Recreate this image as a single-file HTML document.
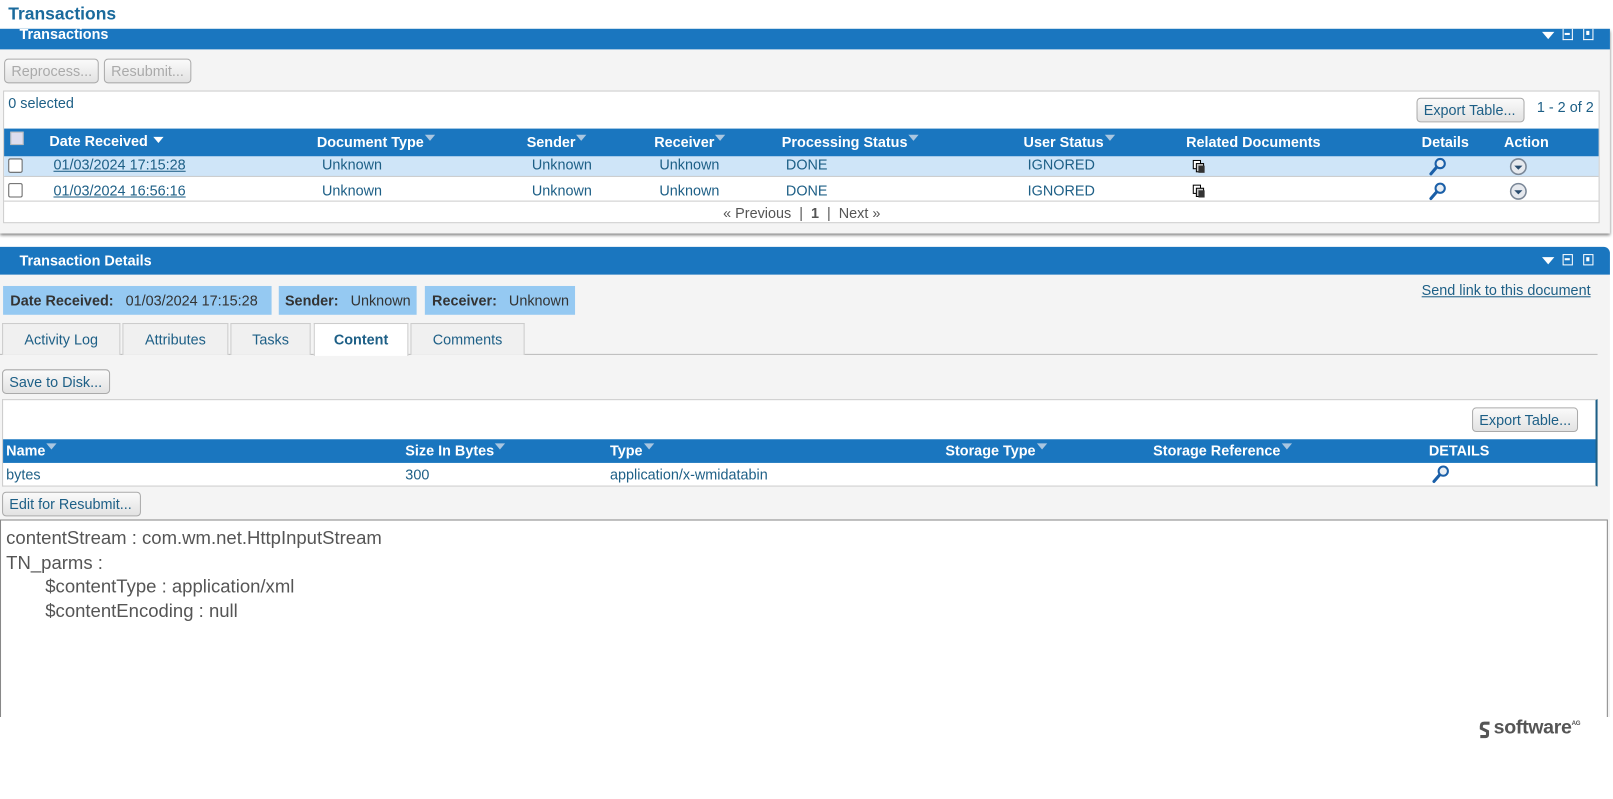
<!DOCTYPE html>
<html><head><meta charset="utf-8"><style>
*{box-sizing:border-box;margin:0;padding:0}
body{width:1613px;height:749px;overflow:hidden;background:#fff;font-family:"Liberation Sans",Arial,sans-serif;font-size:14px;color:#1d5f86;position:relative}
#w{position:absolute;left:0;top:0;width:1568px;height:728px;transform:scale(1.0287);transform-origin:0 0}
.a{position:absolute;white-space:nowrap}
.blue{background:#1a76bf}
.hd{color:#fff;font-weight:bold;font-size:14px}
.btn{position:absolute;height:24px;border:1px solid #aaa;border-radius:4px;background:linear-gradient(#fafafa,#e2e2e2);font-size:14px;line-height:22px;padding:0 6px;color:#1d5f86;white-space:nowrap}
.dis{color:#aaa}
.tri{display:inline-block;width:0;height:0;border-left:5px solid transparent;border-right:5px solid transparent;border-top:6px solid #a9c6e0;margin-left:1px;vertical-align:6px}
.trw{border-top-color:#fff}
.ctl{position:absolute;width:10px;height:11px;border:1.5px solid #fff}
u{text-decoration:underline}
</style></head><body><div id="w">
<div class="a" style="left:8px;top:4px;font-size:17px;font-weight:bold;color:#1a6a9c">Transactions</div>

<div class="a" style="left:0;top:28px;width:1565px;height:199px;background:#f4f4f4;box-shadow:0 2px 3px #777"></div>
<div class="a blue" style="left:0;top:28px;width:1565px;height:20px"></div>
<div class="a hd" style="left:19px;top:25px">Transactions</div>
<div class="a" style="left:1499px;top:31px;border-left:6px solid transparent;border-right:6px solid transparent;border-top:7px solid #fff"></div>
<div class="ctl" style="left:1519px;top:28px;border-top:none"><div style="position:absolute;left:1px;top:4px;width:5px;height:1.5px;background:#fff"></div></div>
<div class="ctl" style="left:1539px;top:28px;border-top:none"><div style="position:absolute;left:2px;top:2px;width:3px;height:4px;background:#fff"></div></div>
<div class="btn dis" style="left:4px;top:57px;width:92px">Reprocess...</div>
<div class="btn dis" style="left:101px;top:57px;width:85px">Resubmit...</div>
<div class="a" style="left:3px;top:88px;width:1552px;height:129px;background:#fff;border:1px solid #ccc"></div>
<div class="a" style="left:8px;top:92px">0 selected</div>
<div class="btn" style="left:1377px;top:95px;width:105px">Export Table...</div>
<div class="a" style="left:1494px;top:96px">1 - 2 of 2</div>
<div class="a blue" style="left:4px;top:125px;width:1550px;height:27px"></div>
<div class="a" style="left:10px;top:128px;width:13px;height:13px;background:#dde;border:1px solid #bbb"></div>
<div class="a hd" style="left:48px;top:129px">Date Received <span class="tri trw" style="vertical-align:3px"></span></div>
<div class="a hd" style="left:308px;top:130px">Document Type<span class="tri"></span></div>
<div class="a hd" style="left:512px;top:130px">Sender<span class="tri"></span></div>
<div class="a hd" style="left:636px;top:130px">Receiver<span class="tri"></span></div>
<div class="a hd" style="left:760px;top:130px">Processing Status<span class="tri"></span></div>
<div class="a hd" style="left:995px;top:130px">User Status<span class="tri"></span></div>
<div class="a hd" style="left:1153px;top:130px">Related Documents</div>
<div class="a hd" style="left:1382px;top:130px">Details</div>
<div class="a hd" style="left:1462px;top:130px">Action</div>
<div class="a" style="left:4px;top:152px;width:1550px;height:20px;background:#cfe5f8;border-bottom:1px solid #ccc"></div>
<div class="a" style="left:4px;top:172px;width:1550px;height:24px;border-bottom:1px solid #ccc"></div>
<div class="a" style="left:8px;top:154px;width:14px;height:14px;border:1px solid #666;border-radius:2px;background:#fff"></div>
<div class="a" style="left:8px;top:178px;width:14px;height:14px;border:1px solid #666;border-radius:2px;background:#fff"></div>
<div class="a" style="left:52px;top:152px"><u>01/03/2024 17:15:28</u></div>
<div class="a" style="left:52px;top:177px"><u>01/03/2024 16:56:16</u></div>
<div class="a" style="left:313px;top:152px">Unknown</div><div class="a" style="left:313px;top:177px">Unknown</div>
<div class="a" style="left:517px;top:152px">Unknown</div><div class="a" style="left:517px;top:177px">Unknown</div>
<div class="a" style="left:641px;top:152px">Unknown</div><div class="a" style="left:641px;top:177px">Unknown</div>
<div class="a" style="left:764px;top:152px">DONE</div><div class="a" style="left:764px;top:177px">DONE</div>
<div class="a" style="left:999px;top:152px">IGNORED</div><div class="a" style="left:999px;top:177px">IGNORED</div>
<svg class="a" style="left:1159px;top:155px" width="14" height="14"><rect x="1" y="1" width="7" height="8" fill="#fff" stroke="#000"/><rect x="4" y="4" width="7" height="8" fill="#ccc" stroke="#000"/><rect x="6" y="6" width="6" height="7" fill="#333"/></svg>
<svg class="a" style="left:1159px;top:179px" width="14" height="14"><rect x="1" y="1" width="7" height="8" fill="#fff" stroke="#000"/><rect x="4" y="4" width="7" height="8" fill="#ccc" stroke="#000"/><rect x="6" y="6" width="6" height="7" fill="#333"/></svg>
<svg class="a" style="left:1388px;top:153px" width="18" height="18"><line x1="3" y1="16" x2="9" y2="9" stroke="#1a5fa8" stroke-width="3" stroke-linecap="round"/><circle cx="12" cy="6" r="4.5" fill="#e8eef4" stroke="#1a5fa8" stroke-width="2"/></svg>
<svg class="a" style="left:1388px;top:177px" width="18" height="18"><line x1="3" y1="16" x2="9" y2="9" stroke="#1a5fa8" stroke-width="3" stroke-linecap="round"/><circle cx="12" cy="6" r="4.5" fill="#e8eef4" stroke="#1a5fa8" stroke-width="2"/></svg>
<svg class="a" style="left:1467px;top:153px" width="18" height="18"><circle cx="9" cy="9" r="7.5" fill="#e6e9ee" stroke="#7a8797" stroke-width="1.5"/><path d="M5 8h8l-4 4z" fill="#2a4c6e"/></svg>
<svg class="a" style="left:1467px;top:177px" width="18" height="18"><circle cx="9" cy="9" r="7.5" fill="#e6e9ee" stroke="#7a8797" stroke-width="1.5"/><path d="M5 8h8l-4 4z" fill="#2a4c6e"/></svg>
<div class="a" style="left:703px;top:199px;color:#555">« Previous &nbsp;| &nbsp;<b>1</b> &nbsp;| &nbsp;Next »</div>

<div class="a" style="left:0;top:240px;width:1565px;height:509px;background:#f4f4f4;border-top-right-radius:6px"></div>
<div class="a blue" style="left:0;top:240px;width:1565px;height:27px;border-top-right-radius:6px"></div>
<div class="a hd" style="left:19px;top:245px">Transaction Details</div>
<div class="a" style="left:1499px;top:250px;border-left:6px solid transparent;border-right:6px solid transparent;border-top:7px solid #fff"></div>
<div class="ctl" style="left:1519px;top:247px"><div style="position:absolute;left:1px;top:3px;width:5px;height:1.5px;background:#fff"></div></div>
<div class="ctl" style="left:1539px;top:247px"><div style="position:absolute;left:2px;top:2px;width:3px;height:4px;background:#fff"></div></div>
<div class="a" style="left:3px;top:278px;width:261px;height:28px;background:#95c9f2"></div>
<div class="a" style="left:271px;top:278px;width:134px;height:28px;background:#95c9f2"></div>
<div class="a" style="left:413px;top:278px;width:146px;height:28px;background:#95c9f2"></div>
<div class="a" style="left:10px;top:284px;color:#333"><b>Date Received:</b>&nbsp;&nbsp; 01/03/2024 17:15:28</div>
<div class="a" style="left:277px;top:284px;color:#333"><b>Sender:</b>&nbsp;&nbsp; Unknown</div>
<div class="a" style="left:420px;top:284px;color:#333"><b>Receiver:</b>&nbsp;&nbsp; Unknown</div>
<div class="a" style="left:1382px;top:274px"><u>Send link to this document</u></div>
<div class="a" style="left:0;top:344px;width:1553px;height:1px;background:#bbb"></div>
<div class="a" style="left:2px;top:314px;width:115px;height:31px;border:1px solid #ccc;border-bottom:none;background:#f0f0f0;text-align:center;line-height:30px">Activity Log</div>
<div class="a" style="left:119px;top:314px;width:103px;height:31px;border:1px solid #ccc;border-bottom:none;background:#f0f0f0;text-align:center;line-height:30px">Attributes</div>
<div class="a" style="left:224px;top:314px;width:78px;height:31px;border:1px solid #ccc;border-bottom:none;background:#f0f0f0;text-align:center;line-height:30px">Tasks</div>
<div class="a" style="left:305px;top:314px;width:92px;height:32px;border:1px solid #ccc;border-bottom:none;background:#fff;text-align:center;line-height:30px;font-weight:bold">Content</div>
<div class="a" style="left:399px;top:314px;width:111px;height:31px;border:1px solid #ccc;border-bottom:none;background:#f0f0f0;text-align:center;line-height:30px">Comments</div>
<div class="btn" style="left:2px;top:359px;width:105px">Save to Disk...</div>
<div class="a" style="left:2px;top:388px;width:1551px;height:85px;background:#fff;border:1px solid #ccc;border-right:2px solid #1d5f86"></div>
<div class="btn" style="left:1431px;top:396px;width:103px">Export Table...</div>
<div class="a blue" style="left:3px;top:427px;width:1548px;height:23px"></div>
<div class="a hd" style="left:6px;top:430px">Name<span class="tri"></span></div>
<div class="a hd" style="left:394px;top:430px">Size In Bytes<span class="tri"></span></div>
<div class="a hd" style="left:593px;top:430px">Type<span class="tri"></span></div>
<div class="a hd" style="left:919px;top:430px">Storage Type<span class="tri"></span></div>
<div class="a hd" style="left:1121px;top:430px">Storage Reference<span class="tri"></span></div>
<div class="a hd" style="left:1389px;top:430px">DETAILS</div>
<div class="a" style="left:6px;top:453px">bytes</div>
<div class="a" style="left:394px;top:453px">300</div>
<div class="a" style="left:593px;top:453px">application/x-wmidatabin</div>
<svg class="a" style="left:1391px;top:452px" width="18" height="18"><line x1="3" y1="16" x2="9" y2="9" stroke="#1a5fa8" stroke-width="3" stroke-linecap="round"/><circle cx="12" cy="6" r="4.5" fill="#e8eef4" stroke="#1a5fa8" stroke-width="2"/></svg>
<div class="btn" style="left:2px;top:478px;width:135px">Edit for Resubmit...</div>
<div class="a" style="left:0;top:505px;width:1563px;height:200px;background:#fff;border:1px solid #888"></div>
<div class="a" style="left:6px;top:512px;font-size:18px;line-height:23.5px;color:#555">contentStream : com.wm.net.HttpInputStream<br>TN_parms :<br><span style="padding-left:38px">$contentType : application/xml</span><br><span style="padding-left:38px">$contentEncoding : null</span></div>
<div class="a" style="left:0;top:697px;width:1568px;height:80px;background:#fff"></div>
<svg class="a" style="left:1437px;top:701px" width="14" height="17"><path d="M11 2H6Q3 2 3 5V7L9 10V13Q9 15 7 15H2" fill="none" stroke="#555" stroke-width="3"/></svg>
<div class="a" style="left:1452px;top:697px;font-size:19px;font-weight:bold;color:#555;letter-spacing:-0.3px">software<sup style="font-size:6px;vertical-align:8px">AG</sup></div>
</div></body></html>
